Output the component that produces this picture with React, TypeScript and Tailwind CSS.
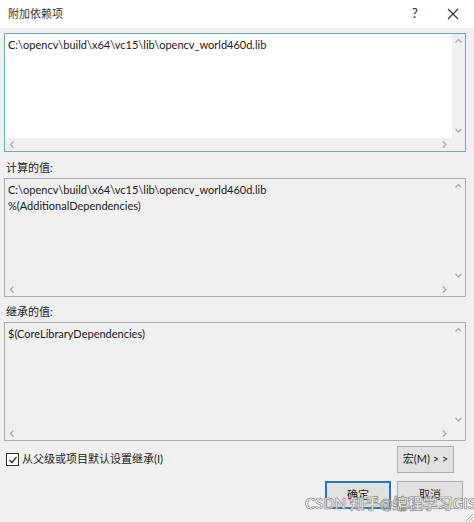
import React from 'react';

const FONT = { fontFamily: 'Lato, "Noto Sans CJK SC", sans-serif' };

function Chevron({ dir }: { dir: 'up' | 'down' | 'left' | 'right' }) {
  const d = {
    up: 'M1.5 5.5 L4.5 2.5 L7.5 5.5',
    down: 'M1.5 3 L4.5 6 L7.5 3',
    left: 'M5.5 1.5 L2.5 4.5 L5.5 7.5',
    right: 'M3 1.5 L6 4.5 L3 7.5',
  }[dir];
  return (
    <svg width="9" height="9" viewBox="0 0 9 9" fill="none" stroke="#a6a6a6" strokeWidth="1.1">
      <path d={d} />
    </svg>
  );
}

function ScrollBox({ lines, active }: { lines: string[]; active?: boolean }) {
  return (
    <div
      className={
        'flex h-[119px] flex-col border ' +
        (active ? 'border-[#78a6b8] bg-white' : 'border-[#acacac] bg-[#f0f0f0]')
      }
    >
      <div className="flex min-h-0 flex-1">
        <div className="flex-1 px-[3px] pt-[3px] text-[11px] leading-[16px] text-[#1a1a1a]">
          {lines.map(l => (
            <div key={l} className="whitespace-pre">{l}</div>
          ))}
        </div>
        <div className="flex w-[13px] flex-col items-center justify-between bg-[#f0f0f0] py-[3px]">
          <Chevron dir="up" />
          <Chevron dir="down" />
        </div>
      </div>
      <div className="flex h-[13px]">
        <div className="flex flex-1 items-center justify-between bg-[#f0f0f0] px-[3px]">
          <Chevron dir="left" />
          <Chevron dir="right" />
        </div>
        <div className="w-[13px] bg-[#f0f0f0]" />
      </div>
    </div>
  );
}

export default function App() {
  return (
    <div className="relative h-[522px] w-[474px] overflow-hidden bg-[#f0f0f0]" style={FONT}>
      {/* Title bar */}
      <div className="flex h-[28px] items-center bg-white pl-[8px] text-[11px] text-[#333]">
        <span className="flex-1">附加依赖项</span>
        <span className="w-[14px] text-center text-[13px] text-[#222]">?</span>
        <span className="ml-[24px] mr-[14px] flex w-[14px] justify-center">
          <svg width="12" height="12" viewBox="0 0 12 12" stroke="#333" strokeWidth="1.1">
            <path d="M1 1 L11 11 M11 1 L1 11" />
          </svg>
        </span>
      </div>

      <div className="flex flex-col pl-[4px] pr-[8px] pt-[5px]">
        <ScrollBox active lines={['C:\\opencv\\build\\x64\\vc15\\lib\\opencv_world460d.lib']} />

        <div className="mt-[5px] h-[21px] pl-[2px] text-[11px] leading-[21px] text-[#222]">计算的值:</div>
        <ScrollBox
          lines={['C:\\opencv\\build\\x64\\vc15\\lib\\opencv_world460d.lib', '%(AdditionalDependencies)']}
        />

        <div className="mt-[4px] h-[21px] pl-[2px] text-[11px] leading-[21px] text-[#222]">继承的值:</div>
        <ScrollBox lines={['$(CoreLibraryDependencies)']} />

        <div className="mt-[5px] flex items-center">
          <div className="flex flex-1 items-center pl-[2px]">
            <span className="flex h-[13px] w-[13px] items-center justify-center border border-[#333] bg-white">
              <svg width="10" height="10" viewBox="0 0 10 10" fill="none" stroke="#222" strokeWidth="1.2">
                <path d="M1.5 5 L4 7.5 L8.5 2" />
              </svg>
            </span>
            <span className="ml-[3px] text-[11px] text-[#222]">从父级或项目默认设置继承(I)</span>
          </div>
          <button className="mr-[12px] h-[27px] w-[57px] border border-[#adadad] bg-[#e1e1e1] text-[11px] text-[#222]">
            宏(M) &gt; &gt;
          </button>
        </div>

        <div className="mt-[8px] flex justify-end gap-[6px] pr-[3px]">
          <button className="h-[28px] w-[66px] border-2 border-[#2a74c0] bg-[#e1e1e1] text-[11px] text-[#222]">
            确定
          </button>
          <button className="h-[28px] w-[66px] border border-[#adadad] bg-[#e1e1e1] text-[11px] text-[#222]">
            取消
          </button>
        </div>
      </div>

      {/* resize grip */}
      <svg className="absolute bottom-[1px] right-[1px]" width="8" height="8" viewBox="0 0 8 8" stroke="#b0b0b0">
        <path d="M8 1 L1 8 M8 4 L4 8 M8 7 L7 8" />
      </svg>

      {/* watermark */}
      <div
        className="pointer-events-none absolute left-[305px] top-[492px] whitespace-nowrap text-[15px] font-bold leading-[22px] text-white/80"
        style={{ WebkitTextStroke: '0.7px #8a8a8a' }}
      >
        CSDN 知乎@编程学习GIS
      </div>
    </div>
  );
}
